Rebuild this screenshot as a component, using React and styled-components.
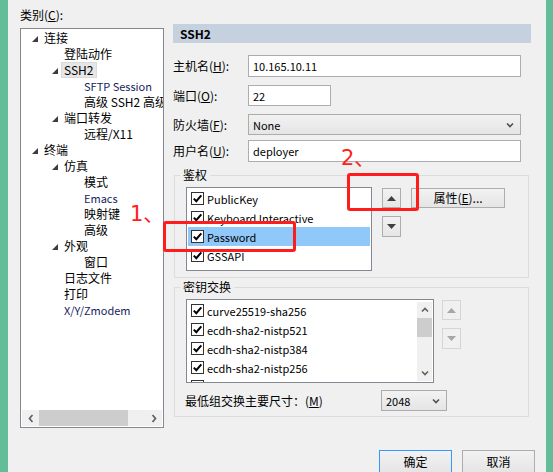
import React from 'react';
import styled, { createGlobalStyle } from 'styled-components';

const GlobalStyle = createGlobalStyle`
  * { box-sizing: border-box; }
  html, body { margin: 0; padding: 0; background: #f0f0f0; }
  body {
    font-family: "Noto Sans CJK SC", "Noto Sans", sans-serif;
    font-size: 12px;
    color: #000;
  }
`;

const Window = styled.div`
  position: relative;
  width: 553px;
  height: 472px;
  overflow: hidden;
  display: flex;
  background: #f0f0f0;
`;

const Edge = styled.div`
  flex: none;
  width: ${p => p.$w}px;
  background: #63bd98;
`;

const Dialog = styled.div`
  flex: 1;
  min-width: 0;
  display: flex;
  flex-direction: column;
  padding: 7px 11px 0 12px;
`;

const Body = styled.div`
  display: grid;
  grid-template-columns: 144px 358px;
  column-gap: 9px;
  align-items: start;
`;

const LeftColumn = styled.div`
  display: flex;
  flex-direction: column;
`;

const CategoryLabel = styled.div`
  height: 16px;
  line-height: 16px;
  margin-bottom: 5px;
`;

const Mn = styled.span`
  text-decoration: underline;
  text-underline-offset: 1px;
`;

const Tree = styled.div`
  height: 400px;
  border: 1px solid #828790;
  background: #fff;
  display: flex;
  flex-direction: column;
`;

const TreeItems = styled.div`
  flex: 1;
  overflow: hidden;
  padding-top: 1px;
`;

const TreeRow = styled.div`
  display: flex;
  align-items: center;
  height: 16px;
  white-space: nowrap;
  padding-left: ${p => 10 + p.$level * 20}px;
`;

const Expander = styled.span`
  flex: none;
  width: 10px;
  height: 16px;
  display: flex;
  align-items: center;
  padding-left: 1px;
  padding-top: 1px;
`;

const ItemLabel = styled.span`
  height: 16px;
  line-height: 14px;
  padding: 0 2px;
  border: 1px solid ${p => (p.$selected ? '#d9d9d9' : 'transparent')};
  background: ${p => (p.$selected ? '#e6e6e6' : 'transparent')};
  color: ${p => (p.$latin ? '#16225e' : '#000')};
  font-size: ${p => (p.$latin ? 11 : 12)}px;
`;

const HScroll = styled.div`
  flex: none;
  height: 16px;
  margin: 0 1px 1px;
  background: #f0f0f0;
  display: flex;
`;

const ScrollArrow = styled.div`
  flex: none;
  width: ${p => p.$w || 17}px;
  height: ${p => p.$h || 16}px;
  display: flex;
  align-items: center;
  justify-content: center;
`;

const HThumb = styled.div`
  flex: none;
  width: 89px;
  background: #cdcdcd;
`;

const Track = styled.div`
  flex: 1;
`;

const RightColumn = styled.div`
  display: flex;
  flex-direction: column;
  padding-top: 17px;
`;

const PageHeader = styled.div`
  height: 19px;
  line-height: 19px;
  padding-left: 7px;
  background: #c5d1de;
  font-weight: 700;
`;

const FieldRow = styled.div`
  display: grid;
  grid-template-columns: 75px auto;
  align-items: center;
  margin-top: ${p => p.$mt}px;
`;

const FieldLabel = styled.span`
  line-height: 16px;
`;

const TextBox = styled.div`
  width: ${p => p.$w}px;
  height: ${p => p.$h}px;
  border: 1px solid #abadb3;
  background: #fff;
  padding-left: 4px;
  display: flex;
  align-items: center;
  font-size: 11px;
`;

const SelectBox = styled.div`
  width: ${p => p.$w}px;
  height: ${p => p.$h}px;
  border: 1px solid #acacac;
  background: linear-gradient(#f2f2f2, #e5e5e5);
  padding: 0 6px 0 4px;
  display: flex;
  align-items: center;
  justify-content: space-between;
  font-size: 11px;
`;

const Group = styled.fieldset`
  margin: ${p => p.$mt}px 2px 0 1px;
  padding: 4px 11px ${p => p.$pb}px 11px;
  border: 1px solid #dcdcdc;
  min-width: 0;
`;

const GroupLegend = styled.legend`
  padding: 0 3px;
  margin-left: -6px;
  line-height: 16px;
`;

const GroupRow = styled.div`
  display: flex;
  align-items: flex-start;
`;

const ListBox = styled.div`
  flex: none;
  width: ${p => p.$w}px;
  height: 84px;
  border: 1px solid #828790;
  background: #fff;
  display: flex;
  overflow: hidden;
`;

const ListItems = styled.div`
  flex: 1;
  min-width: 0;
  overflow: hidden;
  padding: 1px 1px 0 1px;
`;

const ListRow = styled.div`
  display: flex;
  align-items: center;
  height: 19px;
  flex: none;
  padding-left: 3px;
  background: ${p => (p.$selected ? '#91c8fa' : 'transparent')};
  white-space: nowrap;
`;

const CheckBox = styled.span`
  flex: none;
  width: 13px;
  height: 13px;
  border: 1px solid #333;
  background: #fff;
  display: flex;
  align-items: center;
  justify-content: center;
`;

const ItemText = styled.span`
  margin-left: 3px;
  font-size: 11px;
`;

const ButtonColumn = styled.div`
  flex: none;
  display: flex;
  flex-direction: column;
  margin-left: ${p => p.$ml}px;
  padding-top: 1px;
`;

const ArrowButton = styled.div`
  width: 19px;
  height: ${p => p.$h}px;
  margin-top: ${p => p.$mt || 0}px;
  border: 1px solid ${p => (p.$disabled ? '#d5d5d5' : '#adadad')};
  background: ${p => (p.$disabled ? '#f0f0f0' : 'linear-gradient(#f2f2f2, #e6e6e6)')};
  display: flex;
  align-items: center;
  justify-content: center;
`;

const PushButton = styled.div`
  flex: none;
  width: ${p => p.$w}px;
  height: ${p => p.$h}px;
  margin-left: ${p => p.$ml || 0}px;
  margin-top: ${p => p.$mt || 0}px;
  border: 1px solid ${p => (p.$default ? '#3399ff' : '#adadad')};
  background: linear-gradient(#f2f2f2, #e5e5e5);
  display: flex;
  align-items: center;
  justify-content: center;
  line-height: 16px;
`;

const VScroll = styled.div`
  flex: none;
  width: 15px;
  margin: 2px 1px 1px 0;
  background: #f0f0f0;
  display: flex;
  flex-direction: column;
`;

const VThumb = styled.div`
  flex: none;
  height: 19px;
  background: #cdcdcd;
`;

const SizeRow = styled.div`
  display: flex;
  align-items: center;
  margin-top: 7px;
  margin-left: -1px;
`;

const SizeLabel = styled.span`
  flex: none;
  width: 196px;
  line-height: 16px;
`;

const ButtonRow = styled.div`
  display: flex;
  justify-content: flex-end;
  gap: 10px;
  margin-top: 22px;
`;

const Callout = styled.div`
  position: absolute;
  left: ${p => p.$x}px;
  top: ${p => p.$y}px;
  width: ${p => p.$w}px;
  height: ${p => p.$h}px;
  border: 3px solid #ff1c1c;
  border-radius: 3px;
  pointer-events: none;
`;

const CalloutNumber = styled.div`
  position: absolute;
  left: ${p => p.$x}px;
  top: ${p => p.$y}px;
  color: #ff2020;
  font-family: "DejaVu Sans", "Noto Sans CJK SC", sans-serif;
  font-size: 21px;
  line-height: 1;
  white-space: nowrap;
  pointer-events: none;
`;

const Triangle = () => (
  <svg width="6" height="6" viewBox="0 0 6 6">
    <polygon points="6,0 6,6 0,6" fill="#3c3c3c" />
  </svg>
);

const Check = () => (
  <svg width="11" height="11" viewBox="0 0 11 11">
    <path d="M1.8 5.6 L4.3 8.2 L9.3 2.3" fill="none" stroke="#000" strokeWidth="2" />
  </svg>
);

const Chevron = ({ dir = 'down', color = '#606060' }) => {
  const pts = {
    down: '1,1.5 4,4.5 7,1.5',
    up: '1,4.5 4,1.5 7,4.5',
  }[dir];
  return (
    <svg width="8" height="6" viewBox="0 0 8 6">
      <polyline points={pts} fill="none" stroke={color} strokeWidth="1.6" />
    </svg>
  );
};

const HChevron = ({ dir }) => (
  <svg width="6" height="9" viewBox="0 0 6 9">
    <polyline
      points={dir === 'left' ? '4.5,1 1.5,4.5 4.5,8' : '1.5,1 4.5,4.5 1.5,8'}
      fill="none"
      stroke="#606060"
      strokeWidth="1.7"
    />
  </svg>
);

const Arrow = ({ dir, color }) => (
  <svg width="9" height="5" viewBox="0 0 9 5">
    <polygon points={dir === 'up' ? '0,5 4.5,0 9,5' : '0,0 4.5,5 9,0'} fill={color} />
  </svg>
);

const treeData = [
  { t: '连接', l: 0, exp: true },
  { t: '登陆动作', l: 1 },
  { t: 'SSH2', l: 1, exp: true, sel: true },
  { t: 'SFTP Session', l: 2, latin: true },
  { t: '高级 SSH2 高级', l: 2 },
  { t: '端口转发', l: 1, exp: true },
  { t: '远程/X11', l: 2 },
  { t: '终端', l: 0, exp: true },
  { t: '仿真', l: 1, exp: true },
  { t: '模式', l: 2 },
  { t: 'Emacs', l: 2, latin: true },
  { t: '映射键', l: 2 },
  { t: '高级', l: 2 },
  { t: '外观', l: 1, exp: true },
  { t: '窗口', l: 2 },
  { t: '日志文件', l: 1 },
  { t: '打印', l: 1 },
  { t: 'X/Y/Zmodem', l: 1, latin: true },
];

const authItems = ['PublicKey', 'Keyboard Interactive', 'Password', 'GSSAPI'];
const kexItems = [
  'curve25519-sha256',
  'ecdh-sha2-nistp521',
  'ecdh-sha2-nistp384',
  'ecdh-sha2-nistp256',
  '',
];

export default function App() {
  return (
    <>
      <GlobalStyle />
      <Window>
        <Edge $w={8} />
        <Dialog>
          <Body>
            <LeftColumn>
              <CategoryLabel>
                类别(<Mn>C</Mn>):
              </CategoryLabel>
              <Tree>
                <TreeItems>
                  {treeData.map((n, i) => (
                    <TreeRow key={i} $level={n.l}>
                      <Expander>{n.exp && <Triangle />}</Expander>
                      <ItemLabel $selected={n.sel} $latin={n.latin}>
                        {n.t}
                      </ItemLabel>
                    </TreeRow>
                  ))}
                </TreeItems>
                <HScroll>
                  <ScrollArrow>
                    <HChevron dir="left" />
                  </ScrollArrow>
                  <HThumb />
                  <Track />
                  <ScrollArrow>
                    <HChevron dir="right" />
                  </ScrollArrow>
                </HScroll>
              </Tree>
            </LeftColumn>

            <RightColumn>
              <PageHeader>SSH2</PageHeader>
              <FieldRow $mt={12}>
                <FieldLabel>
                  主机名(<Mn>H</Mn>):
                </FieldLabel>
                <TextBox $w={273} $h={22}>10.165.10.11</TextBox>
              </FieldRow>
              <FieldRow $mt={8}>
                <FieldLabel>
                  端口(<Mn>O</Mn>):
                </FieldLabel>
                <TextBox $w={83} $h={21}>22</TextBox>
              </FieldRow>
              <FieldRow $mt={8}>
                <FieldLabel>
                  防火墙(<Mn>F</Mn>):
                </FieldLabel>
                <SelectBox $w={273} $h={21}>
                  <span>None</span>
                  <Chevron dir="down" color="#505050" />
                </SelectBox>
              </FieldRow>
              <FieldRow $mt={5}>
                <FieldLabel>
                  用户名(<Mn>U</Mn>):
                </FieldLabel>
                <TextBox $w={273} $h={22}>deployer</TextBox>
              </FieldRow>

              <Group $mt={5} $pb={6}>
                <GroupLegend>鉴权</GroupLegend>
                <GroupRow>
                  <ListBox $w={186}>
                    <ListItems>
                      {authItems.map(a => (
                        <ListRow key={a} $selected={a === 'Password'}>
                          <CheckBox>
                            <Check />
                          </CheckBox>
                          <ItemText>{a}</ItemText>
                        </ListRow>
                      ))}
                    </ListItems>
                  </ListBox>
                  <ButtonColumn $ml={10}>
                    <ArrowButton $h={20}>
                      <Arrow dir="up" color="#404040" />
                    </ArrowButton>
                    <ArrowButton $h={21} $mt={8}>
                      <Arrow dir="down" color="#404040" />
                    </ArrowButton>
                  </ButtonColumn>
                  <PushButton $w={94} $h={20} $ml={10} $mt={1}>
                    属性(<Mn>E</Mn>)...
                  </PushButton>
                </GroupRow>
              </Group>

              <Group $mt={1} $pb={5}>
                <GroupLegend>密钥交换</GroupLegend>
                <GroupRow>
                  <ListBox $w={248}>
                    <ListItems>
                      {kexItems.map((k, i) => (
                        <ListRow key={i}>
                          <CheckBox>
                            <Check />
                          </CheckBox>
                          {k && <ItemText>{k}</ItemText>}
                        </ListRow>
                      ))}
                    </ListItems>
                    <VScroll>
                      <ScrollArrow $w={15} $h={16}>
                        <Chevron dir="up" />
                      </ScrollArrow>
                      <VThumb />
                      <Track />
                      <ScrollArrow $w={15} $h={16}>
                        <Chevron dir="down" />
                      </ScrollArrow>
                    </VScroll>
                  </ListBox>
                  <ButtonColumn $ml={8}>
                    <ArrowButton $h={20} $disabled>
                      <Arrow dir="up" color="#a6a6a6" />
                    </ArrowButton>
                    <ArrowButton $h={21} $mt={8} $disabled>
                      <Arrow dir="down" color="#a6a6a6" />
                    </ArrowButton>
                  </ButtonColumn>
                </GroupRow>
                <SizeRow>
                  <SizeLabel>
                    最低组交换主要尺寸：(<Mn>M</Mn>)
                  </SizeLabel>
                  <SelectBox $w={66} $h={21}>
                    <span>2048</span>
                    <Chevron dir="down" color="#505050" />
                  </SelectBox>
                </SizeRow>
              </Group>
            </RightColumn>
          </Body>

          <ButtonRow>
            <PushButton $w={73} $h={23} $default>
              确定
            </PushButton>
            <PushButton $w={73} $h={23}>
              取消
            </PushButton>
          </ButtonRow>
        </Dialog>
        <Edge $w={7} />

        <CalloutNumber $x={130} $y={204}>1、</CalloutNumber>
        <Callout $x={163} $y={221} $w={133} $h={31} />
        <CalloutNumber $x={341} $y={148}>2、</CalloutNumber>
        <Callout $x={347} $y={173} $w={72} $h={38} />
      </Window>
    </>
  );
}
